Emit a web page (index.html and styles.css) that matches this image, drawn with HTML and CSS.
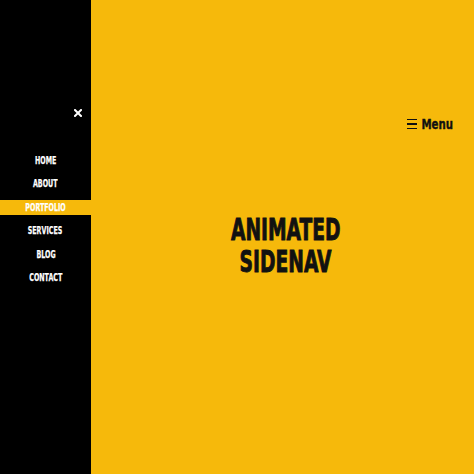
FILE: index.html
```html
<!DOCTYPE html>
<html lang="en">
<head>
<meta charset="utf-8">
<title>Animated Sidenav</title>
<link rel="stylesheet" href="styles.css">
</head>
<body>
<div class="layout">
  <aside class="sidenav">
    <div class="close-row">
      <a class="close" href="#" aria-label="Close">
        <svg width="8" height="8" viewBox="0 0 8 8"><path d="M1 1L7 7M7 1L1 7" stroke="#fff" stroke-width="2" stroke-linecap="square"/></svg>
      </a>
    </div>
    <nav class="links">
      <a class="link" href="#"><span class="cond">HOME</span></a>
      <a class="link" href="#"><span class="cond">ABOUT</span></a>
      <a class="link active" href="#"><span class="cond">PORTFOLIO</span></a>
      <a class="link" href="#"><span class="cond">SERVICES</span></a>
      <a class="link" href="#"><span class="cond">BLOG</span></a>
      <a class="link" href="#"><span class="cond">CONTACT</span></a>
    </nav>
  </aside>
  <main class="main">
    <div class="topbar">
      <a class="menu-btn" href="#">
        <span class="burger"><i></i><i></i><i></i></span>
        <span class="cond menu-text">Menu</span>
      </a>
    </div>
    <h1 class="title">
      <span class="title-line">ANIMATED</span>
      <span class="title-line">SIDENAV</span>
    </h1>
  </main>
</div>
</body>
</html>
```
FILE: styles.css
```css
html, body {
  margin: 0;
  padding: 0;
  height: 100%;
}
body {
  background: #f6b90b;
  font-family: "DejaVu Sans Condensed", "Liberation Sans", sans-serif;
  font-weight: bold;
}
.layout {
  display: flex;
  height: 100%;
}
.cond {
  display: inline-block;
}
.sidenav {
  width: 91px;
  background: #000;
  flex-shrink: 0;
  padding-top: 104px;
  box-sizing: border-box;
}
.close-row {
  display: flex;
  justify-content: flex-end;
  align-items: center;
  padding-right: 9px;
  height: 18px;
}
.close {
  display: block;
  width: 8px;
  height: 8px;
}
.close svg {
  display: block;
}
.links {
  display: flex;
  flex-direction: column;
  margin-top: 26.5px;
}
.link {
  display: block;
  text-align: center;
  color: #fff;
  text-decoration: none;
  font-size: 11px;
  height: 23.6px;
  line-height: 23.6px;
}
.link .cond {
  transform: scaleX(0.64);
  -webkit-text-stroke: 0.25px #fff;
}
.link.active {
  background: #f6b90b;
  height: 15px;
  line-height: 15px;
  margin: 4.3px 0;
}
.main {
  flex: 1;
  display: flex;
  flex-direction: column;
}
.topbar {
  display: flex;
  justify-content: flex-end;
  padding: 114px 21px 0 0;
}
.menu-btn {
  display: flex;
  align-items: center;
  color: #111;
  text-decoration: none;
}
.burger {
  display: flex;
  flex-direction: column;
  gap: 3px;
  width: 10px;
}
.burger i {
  display: block;
  height: 1.5px;
  background: #111;
}
.menu-text {
  font-size: 14px;
  line-height: 20px;
  transform: scaleX(0.81);
  transform-origin: right center;
  margin-left: -3px;
  -webkit-text-stroke: 0.35px #111;
}
.title {
  margin: 0;
  display: flex;
  flex-direction: column;
  align-items: center;
  gap: 0;
  font-size: 31px;
  color: #111;
  padding: 81px 0 0 6px;
}
.title-line {
  display: block;
  height: 32px;
  line-height: 28px;
  transform: scaleX(0.67);
  -webkit-text-stroke: 0.9px #111;
}
```
